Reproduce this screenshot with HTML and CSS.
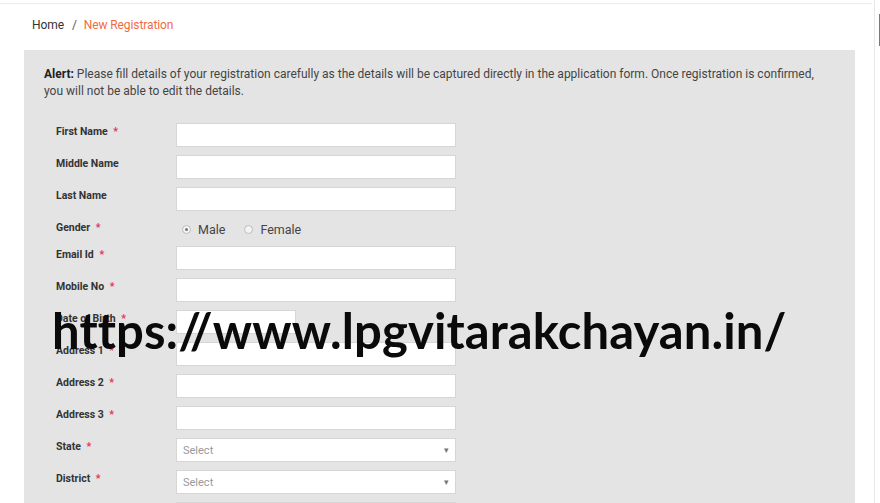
FILE: index.html
```html
<!DOCTYPE html>
<html lang="en">
<head>
<meta charset="utf-8">
<title>New Registration</title>
<link rel="stylesheet" href="styles.css">
</head>
<body>
<div class="page">
  <div class="main">
    <div class="topline"></div>
    <nav class="crumbs"><span class="home">Home</span><span class="sep">/</span><span class="current">New Registration</span></nav>
    <section class="panel">
      <p class="alert"><b>Alert:</b> Please fill details of your registration carefully as the details will be captured directly in the application form. Once registration is confirmed, you will not be able to edit the details.</p>
      <form class="form">
        <div class="row"><label class="lbl">First Name <i>*</i></label><div class="field"></div></div>
        <div class="row"><label class="lbl">Middle Name</label><div class="field"></div></div>
        <div class="row"><label class="lbl">Last Name</label><div class="field"></div></div>
        <div class="row short"><label class="lbl">Gender <i>*</i></label>
          <div class="radios">
            <span class="radio on"></span><span class="rtext">Male</span>
            <span class="radio"></span><span class="rtext">Female</span>
          </div>
        </div>
        <div class="row"><label class="lbl">Email Id <i>*</i></label><div class="field"></div></div>
        <div class="row"><label class="lbl">Mobile No <i>*</i></label><div class="field"></div></div>
        <div class="row"><label class="lbl">Date of Birth <i>*</i></label><div class="field date"></div></div>
        <div class="row"><label class="lbl">Address 1 <i>*</i></label><div class="field"></div></div>
        <div class="row"><label class="lbl">Address 2 <i>*</i></label><div class="field"></div></div>
        <div class="row"><label class="lbl">Address 3 <i>*</i></label><div class="field"></div></div>
        <div class="row sel"><label class="lbl">State <i>*</i></label><div class="field select"><span>Select</span><span class="arrow">&#9662;</span></div></div>
        <div class="row sel"><label class="lbl">District <i>*</i></label><div class="field select"><span>Select</span><span class="arrow">&#9662;</span></div></div>
        <div class="row"><label class="lbl"></label><div class="field"></div></div>
      </form>
      <div class="watermark">https://www.lpgvitarakchayan.in/</div>
    </section>
  </div>
  <div class="rail"><div class="thumb"></div></div>
</div>
</body>
</html>
```

FILE: styles.css
```css
* { box-sizing: border-box; }
html, body { margin: 0; padding: 0; background: #fff; }
body { font-family: Roboto, "Liberation Sans", Arial, sans-serif; color: #333; height: 503px; overflow: hidden; }

.page { display: flex; height: 503px; }
.main { width: 875px; border-right: 1px solid #e8e8e8; position: relative; }
.rail { width: 5px; display: flex; justify-content: flex-end; }
.thumb { width: 1px; height: 32px; margin-top: 14px; background: #7a7a7a; }

.topline { height: 4px; border-bottom: 1px solid #ececec; margin-right: 2px; }

.crumbs { height: 46px; padding: 14px 0 0 32px; font-size: 12px; line-height: 15px; letter-spacing: -0.1px; }
.crumbs .home { color: #333; }
.crumbs .sep { color: #555; margin: 0 7px 0 8px; }
.crumbs .current { color: #f26b3f; }

.panel { position: relative; margin-left: 24px; width: 831px; height: 460px; background: #e4e4e4; padding: 16px 20px 0 20px; }
.alert { margin: 0; font-size: 12px; line-height: 17px; color: #444; }
.alert b { color: #222; }

.form { margin-top: 23px; padding-left: 12px; display: flex; flex-direction: column; gap: 8px; }
.row { display: flex; height: 24px; }
.row.short { height: 19px; }
.lbl { width: 120px; padding-top: 2px; font-size: 10.5px; font-weight: bold; color: #333; line-height: 14px; }
.lbl i { font-style: normal; color: #e0315a; margin-left: 3px; }
.field { width: 280px; height: 24px; background: #fff; border: 1px solid #d6d6d6; }
.field.date { width: 120px; }
.field.select { display: flex; align-items: center; justify-content: space-between; padding: 0 6px 0 6px; font-size: 11px; color: #9a9a9a; }
.field.select .arrow { font-size: 9px; color: #777; }

.radios { display: flex; align-items: center; height: 20px; padding-left: 6px; font-size: 12.5px; color: #444; }
.radio { width: 9px; height: 9px; border-radius: 50%; border: 1px solid #bbb; background: #f4f4f4; position: relative; }
.radio.on::after { content: ""; position: absolute; left: 2px; top: 2px; width: 3px; height: 3px; border-radius: 50%; background: #777; }
.rtext { margin: 0 19px 0 7px; }

.watermark { position: absolute; left: 28px; top: 252px; font-family: Lato, "Open Sans", sans-serif; font-weight: 700; font-size: 49px; line-height: 56px; color: #0a0a0a; white-space: nowrap; letter-spacing: 0.1px; }
```
